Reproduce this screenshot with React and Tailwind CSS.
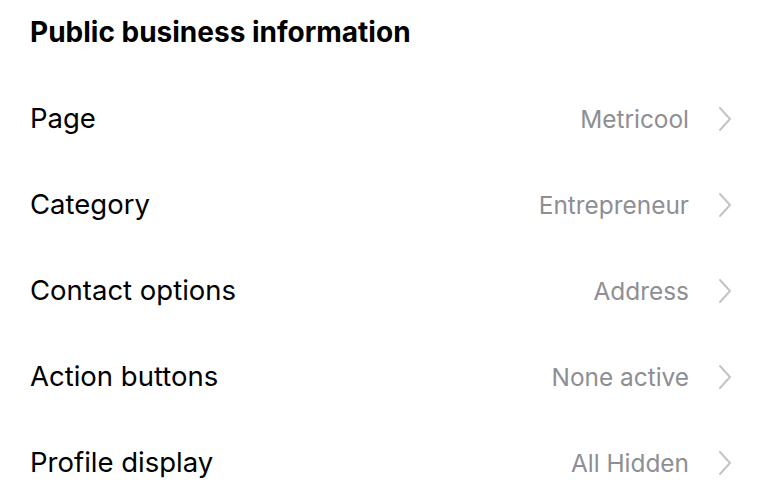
import React from "react";

const rows = [
  ["Page", "Metricool"],
  ["Category", "Entrepreneur"],
  ["Contact options", "Address"],
  ["Action buttons", "None active"],
  ["Profile display", "All Hidden"],
];

function Chevron() {
  return (
    <svg width="16" height="26" viewBox="0 0 16 26" fill="none">
      <path d="M3 2 L13 13 L3 24" stroke="#c4c4c8" strokeWidth="2" strokeLinecap="round" strokeLinejoin="round" />
    </svg>
  );
}

export default function App() {
  return (
    <div className="w-[768px] h-[495px] bg-white overflow-hidden" style={{ fontFamily: "Inter, 'Liberation Sans', sans-serif" }}>
      <div className="h-[76px] pt-[13px] pl-[30px]">
        <div className="text-[28px] leading-[38px] font-bold text-black">Public business information</div>
      </div>
      {rows.map(([label, value]) => (
        <div key={label} className="h-[86px] flex items-center pl-[30px] pr-[35px]">
          <div className="flex-1 text-[27.5px] text-black">{label}</div>
          <div className="text-[24.4px] text-[#8e8e93] mr-[28px]">{value}</div>
          <Chevron />
        </div>
      ))}
    </div>
  );
}
